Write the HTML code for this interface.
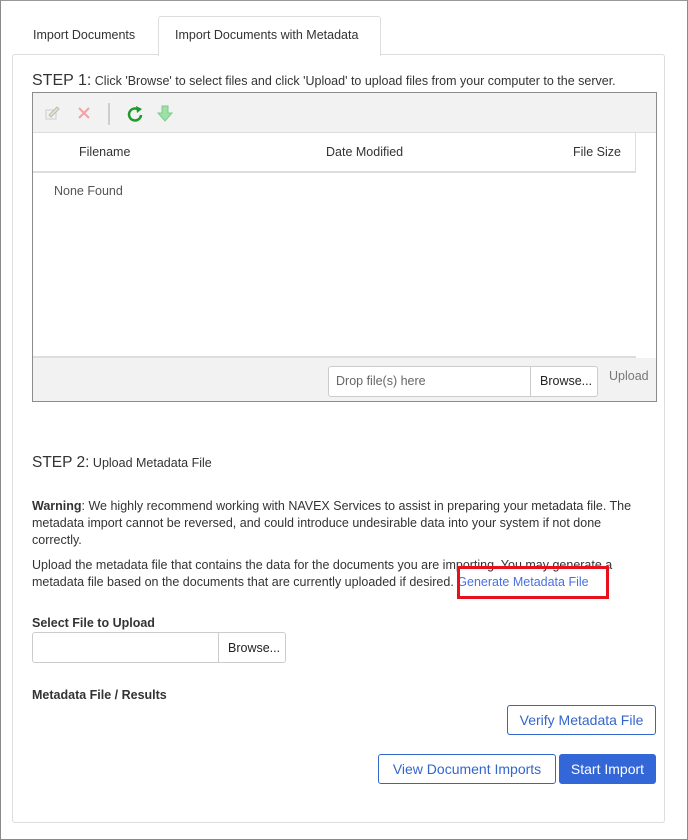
<!DOCTYPE html>
<html><head><style>
*{box-sizing:border-box;margin:0;padding:0}
body{width:688px;height:840px;position:relative;background:#fff;font-family:"Liberation Sans",sans-serif;font-size:12px;color:#333;overflow:hidden}
.a{position:absolute;white-space:nowrap}
.frame{left:0;top:0;width:688px;height:840px;border:1px solid #8a8a8a;border-top-color:#999}
.panel{left:12px;top:54px;width:653px;height:769px;border:1px solid #ddd;border-radius:3px}
.tab{left:158px;top:16px;width:223px;height:40px;border:1px solid #ddd;border-bottom:none;border-radius:3px 3px 0 0;background:#fff}
.grid{left:32px;top:92px;width:625px;height:310px;border:1px solid #8c8c8c}
.btn{border:1px solid #3366cc;border-radius:3px;color:#3366cc;font-size:14px;text-align:center;background:#fff}
</style></head><body>
<div class="a frame"></div>
<div class="a panel"></div>
<div class="a tab"></div>
<div class="a" style="left:33px;top:28px;font-size:12.5px">Import Documents</div>
<div class="a" style="left:175px;top:28px;font-size:12.5px">Import Documents with Metadata</div>
<div class="a" style="left:32px;top:72px;font-size:12.5px"><span style="font-size:16px">STEP 1:</span> Click 'Browse' to select files and click 'Upload' to upload files from your computer to the server.</div>
<div class="a grid">
 <div class="a" style="left:0;top:0;width:623px;height:40px;background:#f2f2f2;border-bottom:1px solid #ddd"></div>
 <svg class="a" style="left:10px;top:10px" width="140" height="22">
  <rect x="3" y="7" width="10" height="9" fill="none" stroke="#ccc"/><path d="M6 12 L14 4 L16 6 L8 14 Z" fill="#e8e2c8" stroke="#bbb"/>
  <path d="M36 5 L46 15 M46 5 L36 15" stroke="#f2a3a3" stroke-width="2"/>
  <line x1="66" y1="-2" x2="66" y2="24" stroke="#aaa"/>
  <path d="M96 7 A6 6 0 1 0 98 12" fill="none" stroke="#1e9a2a" stroke-width="2.5"/><path d="M93 3 L99 6 L94 10Z" fill="#1e9a2a"/>
  <path d="M119 3 h6 v7 h4 l-7 8 l-7 -8 h4z" fill="#9ee0a8" stroke="#7ccb88"/>
 </svg>
 <div class="a" style="left:0;top:40px;width:603px;height:40px;border-bottom:2px solid #ddd;border-right:1px solid #ddd"></div>
 <div class="a" style="left:46px;top:52px;font-size:12.5px">Filename</div>
 <div class="a" style="left:293px;top:52px;font-size:12.5px">Date Modified</div>
 <div class="a" style="left:540px;top:52px;font-size:12.5px">File Size</div>
 <div class="a" style="left:21px;top:91px;font-size:12.5px;color:#555">None Found</div>
 <div class="a" style="left:0;top:263px;width:603px;height:2px;background:#ddd"></div>
 <div class="a" style="left:0;top:265px;width:623px;height:43px;background:#f2f2f2"></div>
 <div class="a" style="left:295px;top:273px;width:203px;height:31px;background:#fff;border:1px solid #ccc;border-radius:3px 0 0 3px;padding:7px;color:#666;font-size:12.5px">Drop file(s) here</div>
 <div class="a" style="left:497px;top:273px;width:68px;height:31px;background:#fff;border:1px solid #ccc;border-radius:0 3px 3px 0;padding:7px 0 0 9px;color:#222;font-size:12.5px">Browse...</div>
 <div class="a" style="left:576px;top:276px;color:#777;font-size:12.5px">Upload</div>
</div>
<div class="a" style="left:32px;top:454px;font-size:12.5px"><span style="font-size:15.5px">STEP 2:</span> Upload Metadata File</div>
<div class="a" style="left:32px;top:498px;width:620px;white-space:normal;line-height:17px;font-size:12.5px"><b>Warning</b>: We highly recommend working with NAVEX Services to assist in preparing your metadata file. The metadata import cannot be reversed, and could introduce undesirable data into your system if not done correctly.</div>
<div class="a" style="left:32px;top:557px;width:620px;white-space:normal;line-height:17px;font-size:12.5px">Upload the metadata file that contains the data for the documents you are importing. You may generate a metadata file based on the documents that are currently uploaded if desired. <span style="color:#4a6fe0">Generate Metadata File</span></div>
<div class="a" style="left:457px;top:566px;width:152px;height:33px;border:3px solid #e8101a"></div>
<div class="a" style="left:32px;top:616px;font-weight:bold;font-size:12.5px">Select File to Upload</div>
<div class="a" style="left:32px;top:632px;width:187px;height:31px;border:1px solid #ccc;border-radius:3px 0 0 3px"></div>
<div class="a" style="left:218px;top:632px;width:68px;height:31px;border:1px solid #ccc;border-radius:0 3px 3px 0;padding:8px 0 0 9px;font-size:12.5px;color:#222">Browse...</div>
<div class="a" style="left:32px;top:688px;font-weight:bold;font-size:12.5px">Metadata File / Results</div>
<div class="a btn" style="left:507px;top:705px;width:149px;height:30px;line-height:28px">Verify Metadata File</div>
<div class="a btn" style="left:378px;top:754px;width:178px;height:30px;line-height:28px">View Document Imports</div>
<div class="a btn" style="left:559px;top:754px;width:97px;height:30px;line-height:28px;background:#3366d6;border-color:#3366d6;color:#fff">Start Import</div>
</body></html>
